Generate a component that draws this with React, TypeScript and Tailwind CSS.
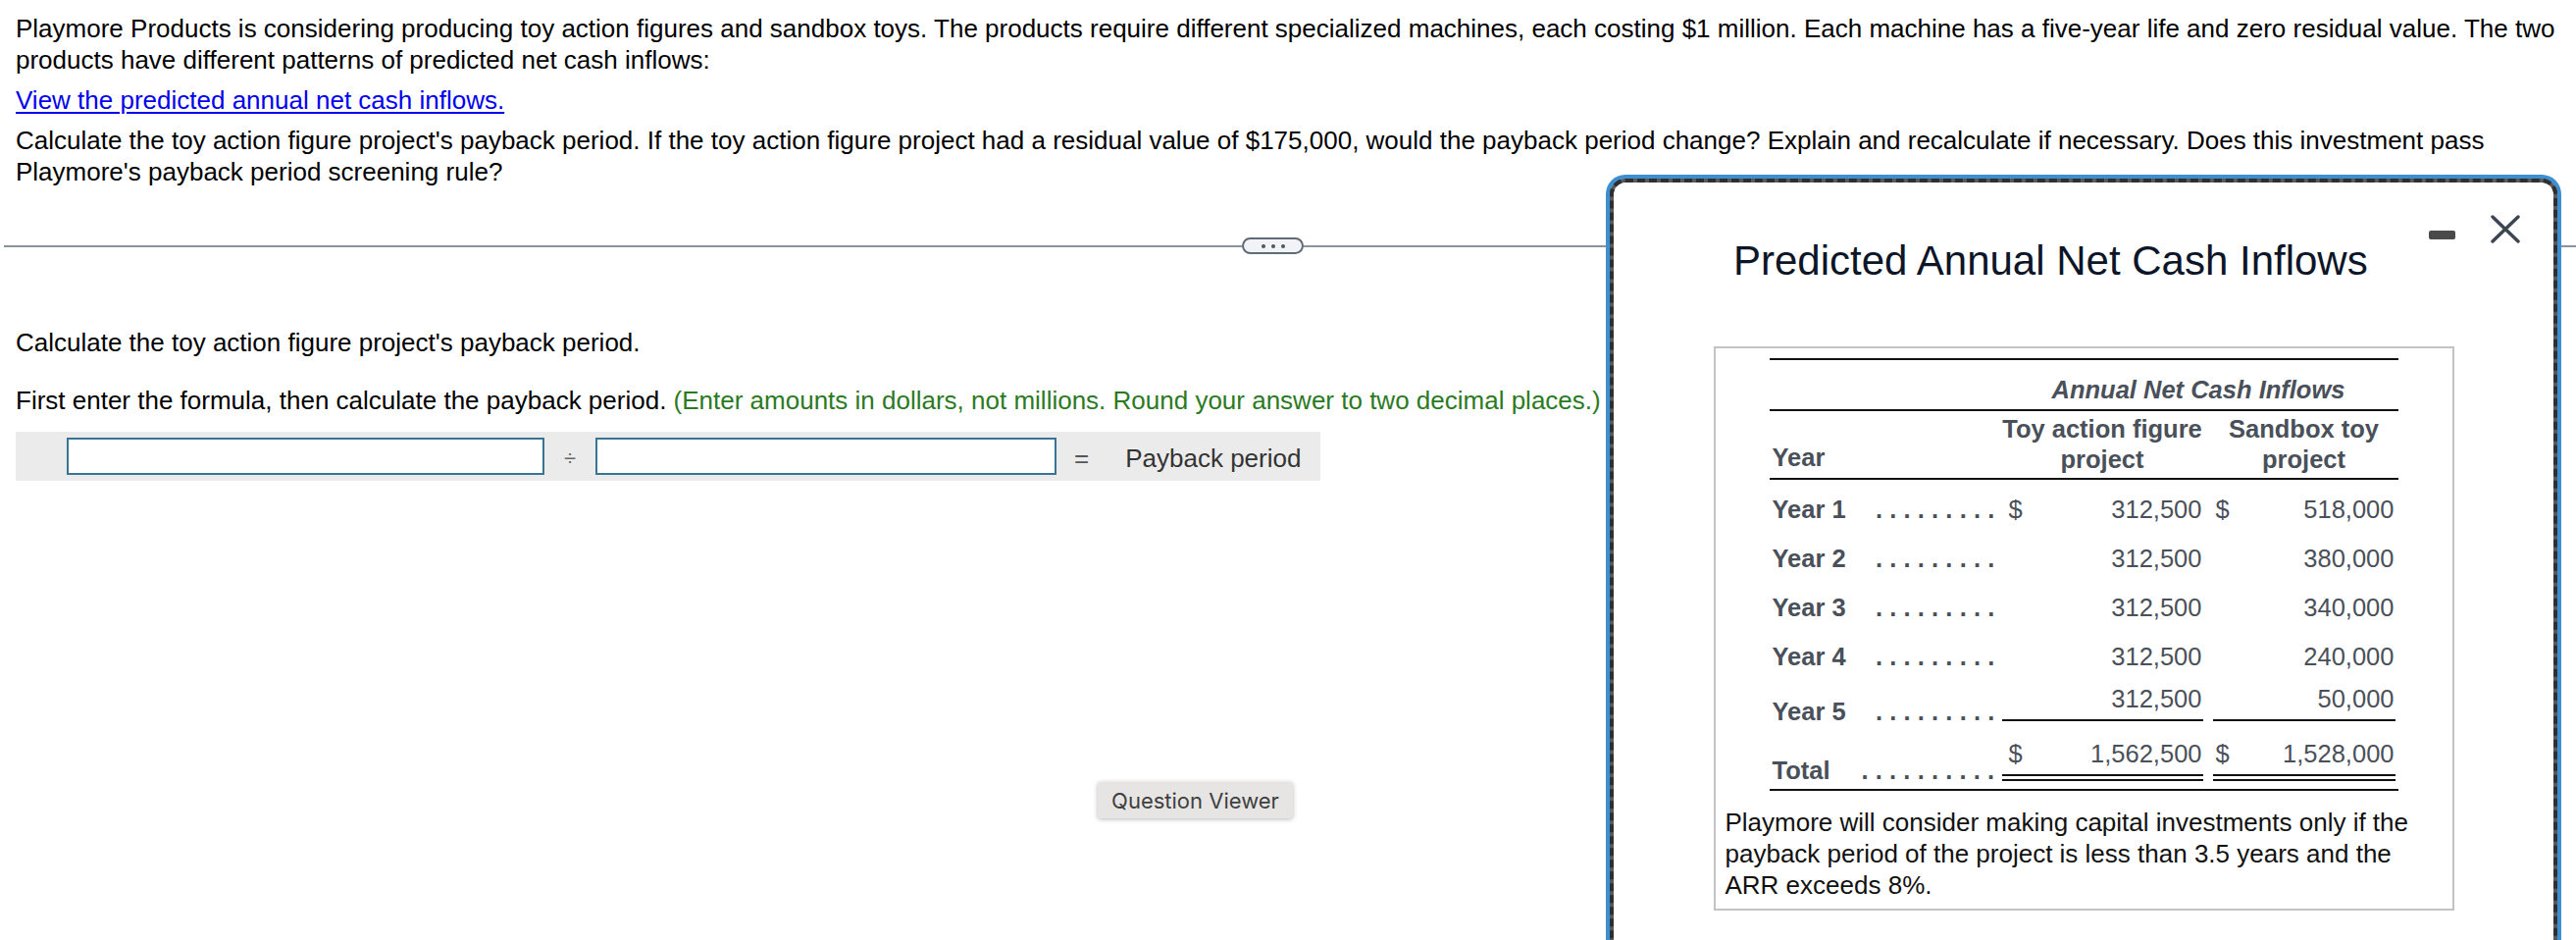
import React from "react";

const rows = [
  { y: "Year 1", a: "312,500", b: "518,000", dollar: true },
  { y: "Year 2", a: "312,500", b: "380,000", dollar: false },
  { y: "Year 3", a: "312,500", b: "340,000", dollar: false },
  { y: "Year 4", a: "312,500", b: "240,000", dollar: false },
];

function Dots({ n = 9 }: { n?: number }) {
  return <span className="tracking-[7.2px] font-bold">{".".repeat(n)}</span>;
}

function CashTable() {
  return (
    <div className="mx-auto mt-[62px] w-[755px] h-[575px] border-2 border-[#c3c3c3] pt-[10px] font-['Liberation_Sans',Arial,sans-serif]">
      <div className="px-[55px] text-[25.5px] text-[#4a5059]">
        <div className="h-[2px] bg-[#111]" />
        <div className="grid grid-cols-[237px_205px_10px_186px_4px] h-[50px]">
          <div className="col-start-2 col-span-3 pt-[14px] leading-[32px] text-center italic font-bold whitespace-nowrap">
            Annual Net Cash Inflows
          </div>
        </div>
        <div className="h-[2px] bg-[#111]" />
        <div className="grid grid-cols-[237px_205px_10px_186px_4px] h-[68px] font-bold leading-[31px]">
          <div className="self-end pb-[5px] pl-[3px]">Year</div>
          <div className="pt-[3px] text-center whitespace-nowrap">
            Toy action figure
            <br />
            project
          </div>
          <div />
          <div className="pt-[3px] text-center whitespace-nowrap">
            Sandbox toy
            <br />
            project
          </div>
        </div>
        <div className="h-[2px] bg-[#111]" />
        {rows.map((r) => (
          <div key={r.y} className="grid grid-cols-[237px_205px_10px_186px_4px] h-[50px] pt-[14px] leading-[32px]">
            <div className="flex whitespace-nowrap">
              <span className="w-[109px] pl-[3px] font-bold">{r.y}</span>
              <Dots />
            </div>
            <div className="flex justify-between pl-[7px] pr-[1px]">
              <span>{r.dollar ? "$" : ""}</span>
              <span>{r.a}</span>
            </div>
            <div />
            <div className="flex justify-between pl-[3px] pr-[1px]">
              <span>{r.dollar ? "$" : ""}</span>
              <span>{r.b}</span>
            </div>
          </div>
        ))}
        <div className="grid grid-cols-[237px_205px_10px_186px_4px] h-[52px] leading-[32px]">
          <div className="flex self-end whitespace-nowrap">
            <span className="w-[109px] pl-[3px] font-bold">Year 5</span>
            <Dots />
          </div>
          <div className="self-start pt-[7px] pb-[5px] pr-[1px] text-right border-b-2 border-[#111]">312,500</div>
          <div />
          <div className="self-start pt-[7px] pb-[5px] pr-[1px] text-right border-b-2 border-[#111]">50,000</div>
        </div>
        <div className="grid grid-cols-[237px_205px_10px_186px_4px] h-[60px] leading-[32px]">
          <div className="flex self-end whitespace-nowrap">
            <span className="w-[94px] pl-[3px] font-bold">Total</span>
            <Dots n={10} />
          </div>
          <div className="self-start pt-[11px]">
            <div className="flex justify-between pl-[7px] pr-[1px] pb-[5px]">
              <span>$</span>
              <span>1,562,500</span>
            </div>
            <div className="h-[2px] bg-[#111]" />
            <div className="h-[2px] mt-[3px] bg-[#111]" />
          </div>
          <div />
          <div className="self-start pt-[11px]">
            <div className="flex justify-between pl-[3px] pr-[1px] pb-[5px]">
              <span>$</span>
              <span>1,528,000</span>
            </div>
            <div className="h-[2px] bg-[#111]" />
            <div className="h-[2px] mt-[3px] bg-[#111]" />
          </div>
        </div>
        <div className="h-[2px] mt-[3px] bg-[#111]" />
      </div>
      <p className="pl-[10px] pt-[16px] text-[26px] leading-[32px] text-[#111] whitespace-nowrap">
        Playmore will consider making capital investments only if the
        <br />
        payback period of the project is less than 3.5 years and the
        <br />
        ARR exceeds 8%.
      </p>
    </div>
  );
}

function Modal() {
  return (
    <div className="absolute left-[1637px] top-[178px] w-[974px] h-[820px] rounded-[20px] bg-[#3d8fd0] p-[4px]">
      <div className="relative h-full rounded-[16px] border-[4px] border-dashed border-[#2f2f2f] bg-white">
        <div className="absolute inset-[-4px] rounded-[16px] border-[4px] border-[#2f2f2f] opacity-80 pointer-events-none" />
        <div className="absolute left-[831px] top-[49px] w-[27px] h-[9px] rounded-[2px] bg-[#4a4a4a]" />
        <svg className="absolute left-[894px] top-[33px]" width="30" height="29" viewBox="0 0 30 29">
          <path d="M2 2 L28 27 M28 2 L2 27" stroke="#3c4552" strokeWidth="3.4" strokeLinecap="round" fill="none" />
        </svg>
        <div className="pt-[55px] pl-[122px] text-[42px] leading-[50px] text-[#0d1528] font-['Liberation_Sans',Arial,sans-serif] whitespace-nowrap">
          Predicted Annual Net Cash Inflows
        </div>
        <CashTable />
      </div>
    </div>
  );
}

export default function App() {
  return (
    <div className="relative w-[2626px] h-[958px] overflow-hidden bg-white text-black font-['Liberation_Sans',Arial,sans-serif]">
      <div className="pl-[16px] pt-[13px] text-[26px] leading-[32px]">
        <p className="whitespace-nowrap">
          Playmore Products is considering producing toy action figures and sandbox toys. The products require different specialized machines, each costing $1 million. Each machine has a five-year life and zero residual value. The two
          <br />
          products have different patterns of predicted net cash inflows:
        </p>
        <p className="mt-[9px]">
          <a href="#" className="text-[#0000ee] underline underline-offset-[3px]">
            View the predicted annual net cash inflows.
          </a>
        </p>
        <p className="mt-[9px] whitespace-nowrap">
          Calculate the toy action figure project's payback period. If the toy action figure project had a residual value of $175,000, would the payback period change? Explain and recalculate if necessary. Does this investment pass
          <br />
          Playmore's payback period screening rule?
        </p>
      </div>

      <div className="mt-[51px] flex items-center h-[17px] pl-[4px]">
        <div className="h-[2px] w-[1262px] bg-[#8a939e]" />
        <div className="w-[63px] h-[17px] rounded-full border-2 border-[#5f6b78] bg-[#f1f3f6] flex items-center justify-center gap-[6px]">
          <span className="w-[4px] h-[4px] rounded-full bg-[#4a5562]" />
          <span className="w-[4px] h-[4px] rounded-full bg-[#4a5562]" />
          <span className="w-[4px] h-[4px] rounded-full bg-[#4a5562]" />
        </div>
        <div className="h-[2px] flex-1 bg-[#8a939e]" />
      </div>

      <div className="pl-[16px] text-[26px] leading-[32px]">
        <p className="mt-[74px]">Calculate the toy action figure project's payback period.</p>
        <p className="mt-[27px] whitespace-nowrap">
          First enter the formula, then calculate the payback period.{" "}
          <span className="text-[#2b7a1f]">
            (Enter amounts in dollars, not millions. Round your answer to two decimal places.)
          </span>
        </p>
        <div className="mt-[16px] flex items-center w-[1330px] h-[50px] bg-[#ebebeb] pl-[52px]">
          <div className="w-[487px] h-[38px] border-2 border-[#3a7495] bg-white" />
          <span className="w-[52px] pt-[3px] text-center text-[22px] text-[#666]">÷</span>
          <div className="w-[470px] h-[38px] border-2 border-[#3a7495] bg-white" />
          <span className="ml-[18px] pt-[4px] text-[#555]">=</span>
          <span className="ml-[37px] pt-[4px] text-[#333] whitespace-nowrap">Payback period</span>
        </div>
        <div className="mt-[307px] ml-[1103px] w-[199px] h-[37px] rounded-[3px] bg-[#e6e5e4] shadow-[0_1px_5px_rgba(0,0,0,0.28)] flex items-center justify-center text-[22px] text-[#3f3f3f] font-['Inter',sans-serif]">
          Question Viewer
        </div>
      </div>

      <Modal />
    </div>
  );
}
